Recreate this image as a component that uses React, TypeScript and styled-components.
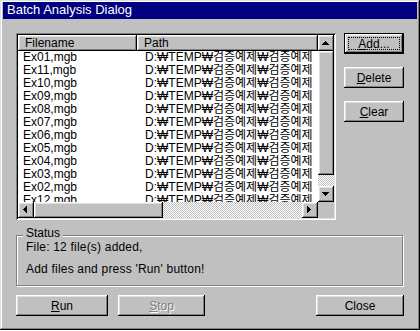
import React from 'react'
import styled, { createGlobalStyle, css } from 'styled-components'

const FONT = `"Liberation Sans", Arial, "Noto Sans CJK KR", sans-serif`
const PATH_FONT = `"Liberation Sans", "DejaVu Sans", "Noto Sans CJK KR", sans-serif`

const GlobalStyle = createGlobalStyle`
  html, body {
    margin: 0;
    padding: 0;
    background: #fff;
  }
  body {
    font-family: ${FONT};
    font-size: 12px;
    color: #000;
  }
`

const raised = css`
  box-shadow: inset -1px -1px #000, inset 1px 1px #fff, inset -2px -2px #808080, inset 2px 2px #dfdfdf;
`

const checker = css`
  background: repeating-conic-gradient(#c0c0c0 0% 25%, #fff 0% 50%) 0 0 / 2px 2px;
`

const files = ['Ex01', 'Ex11', 'Ex10', 'Ex09', 'Ex08', 'Ex07', 'Ex06', 'Ex05', 'Ex04', 'Ex03', 'Ex02', 'Ex12']
const PATH = 'D:₩TEMP₩검증예제₩검증예제'

type Dir = 'up' | 'down' | 'left' | 'right'

const Arrow: React.FC<{ dir: Dir }> = ({ dir }) => {
  const widths = dir === 'up' || dir === 'left' ? [1, 3, 5, 7] : [7, 5, 3, 1]
  const vertical = dir === 'up' || dir === 'down'
  return (
    <ArrowSvg
      $vertical={vertical}
      width={vertical ? 7 : 4}
      height={vertical ? 4 : 7}
      shapeRendering="crispEdges"
    >
      {widths.map((w, i) =>
        vertical ? (
          <rect key={i} x={(7 - w) / 2} y={i} width={w} height={1} fill="#000" />
        ) : (
          <rect key={i} x={i} y={(7 - w) / 2} width={1} height={w} fill="#000" />
        ),
      )}
    </ArrowSvg>
  )
}

const App: React.FC = () => {
  return (
    <>
      <GlobalStyle />
      <Window>
        <TitleBar>Batch Analysis Dialog</TitleBar>
        <Content>
          <MainRow>
            <ListView>
              <ListContent>
                <Header>
                  <HeaderCell>Filename</HeaderCell>
                  <HeaderCell>Path</HeaderCell>
                </Header>
                {files.map(f => (
                  <Row key={f}>
                    <FileCell>{f},mgb</FileCell>
                    <PathCell>{PATH}</PathCell>
                  </Row>
                ))}
              </ListContent>
              <VScroll>
                <ScrollButton><Arrow dir="up" /></ScrollButton>
                <Thumb $size={124} />
                <Track />
                <ScrollButton><Arrow dir="down" /></ScrollButton>
              </VScroll>
              <HScroll>
                <ScrollButton><Arrow dir="left" /></ScrollButton>
                <Thumb $size={129} />
                <Track />
                <ScrollButton><Arrow dir="right" /></ScrollButton>
              </HScroll>
              <Corner />
            </ListView>
            <ButtonColumn>
              <Button $w={60} $default $focus><u>A</u>dd...</Button>
              <Button $w={60}><u>D</u>elete</Button>
              <Button $w={60}><u>C</u>lear</Button>
            </ButtonColumn>
          </MainRow>
          <GroupBox>
            <Legend>Status</Legend>
            <StatusLine $first>File: 12 file(s) added,</StatusLine>
            <StatusLine>Add files and press 'Run' button!</StatusLine>
          </GroupBox>
          <BottomRow>
            <Button $w={92}><u>R</u>un</Button>
            <Button $w={87} disabled><u>S</u>top</Button>
            <Spacer />
            <Button $w={88}>Close</Button>
          </BottomRow>
        </Content>
      </Window>
    </>
  )
}

const Window = styled.div`
  width: 420px;
  height: 330px;
  box-sizing: border-box;
  background: #c0c0c0;
  box-shadow: inset -1px -1px #000, inset 1px 1px #dfdfdf, inset -2px -2px #808080, inset 2px 2px #fff;
  display: flex;
  flex-direction: column;
`

const TitleBar = styled.div`
  margin: 2px 3px 0;
  height: 17px;
  padding: 0 0 2px 4px;
  box-sizing: border-box;
  background: #000080;
  color: #fff;
  font-size: 13px;
  display: flex;
  align-items: center;
  white-space: nowrap;
`

const Content = styled.div`
  padding: 14px 16px 0;
  display: flex;
  flex-direction: column;
`

const MainRow = styled.div`
  display: flex;
  gap: 8px;
  height: 187px;
`

const ListView = styled.div`
  width: 320px;
  height: 187px;
  box-sizing: border-box;
  padding: 2px;
  background: #fff;
  box-shadow: inset 1px 1px #808080, inset -1px -1px #fff, inset 2px 2px #000, inset -2px -2px #dfdfdf;
  display: grid;
  grid-template-columns: 1fr 16px;
  grid-template-rows: 1fr 16px;
`

const ListContent = styled.div`
  overflow: hidden;
  background: #fff;
  min-width: 0;
  min-height: 0;
`

const Header = styled.div`
  display: grid;
  grid-template-columns: 119px 1fr;
  height: 16px;
`

const HeaderCell = styled.div`
  background: #c0c0c0;
  ${raised};
  padding-left: 7px;
  line-height: 16px;
  white-space: nowrap;
`

const Row = styled.div`
  display: grid;
  grid-template-columns: 119px 1fr;
  height: 13px;
  line-height: 13px;
  white-space: nowrap;
`

const FileCell = styled.div`
  padding-left: 5px;
`

const PathCell = styled.div`
  padding-left: 8px;
  overflow: hidden;
  font-family: ${PATH_FONT};
`

const VScroll = styled.div`
  display: flex;
  flex-direction: column;
  min-height: 0;
`

const HScroll = styled.div`
  display: flex;
  min-width: 0;
`

const ScrollButton = styled.div`
  width: 16px;
  height: 16px;
  flex: none;
  box-sizing: border-box;
  background: #c0c0c0;
  ${raised};
  display: flex;
  align-items: flex-start;
  justify-content: flex-start;
`

const ArrowSvg = styled.svg<{ $vertical: boolean }>`
  display: block;
  margin: ${p => (p.$vertical ? '6px 0 0 4px' : '4px 0 0 5px')};
`

const Thumb = styled.div<{ $size: number }>`
  flex: 0 0 ${p => p.$size}px;
  background: #c0c0c0;
  ${raised};
`

const Track = styled.div`
  flex: 1;
  ${checker};
`

const Corner = styled.div`
  background: #c0c0c0;
`

const ButtonColumn = styled.div`
  display: flex;
  flex-direction: column;
  gap: 13px;
`

const Button = styled.button<{ $w: number; $default?: boolean; $focus?: boolean }>`
  width: ${p => p.$w}px;
  height: 21px;
  flex: none;
  margin: 0;
  padding: 0;
  position: relative;
  box-sizing: border-box;
  background: #c0c0c0;
  font-family: ${FONT};
  font-size: 12px;
  color: #000;
  border: ${p => (p.$default ? '1px solid #000' : 'none')};
  ${raised};

  &::after {
    content: '';
    display: ${p => (p.$focus ? 'block' : 'none')};
    position: absolute;
    inset: 3px 3px;
    border: 1px dotted #000;
  }

  &:disabled {
    color: #808080;
    text-shadow: 1px 1px 0 #fff;
  }
`

const GroupBox = styled.fieldset`
  margin: 7px 1px 0 0;
  padding: 0 9px 9px;
  min-width: 0;
  border: 1px solid #808080;
  box-shadow: inset 1px 1px #fff, 1px 1px #fff;
`

const Legend = styled.legend`
  margin-left: -3px;
  padding: 0 3px 4px;
  line-height: 13px;
  background: #c0c0c0;
`

const StatusLine = styled.div<{ $first?: boolean }>`
  line-height: 13px;
  margin-top: ${p => (p.$first ? '-3px' : '9px')};
  white-space: nowrap;
  letter-spacing: 0.2px;
`

const BottomRow = styled.div`
  display: flex;
  gap: 10px;
  margin-top: 9px;
`

const Spacer = styled.div`
  flex: 1;
`

export default App
